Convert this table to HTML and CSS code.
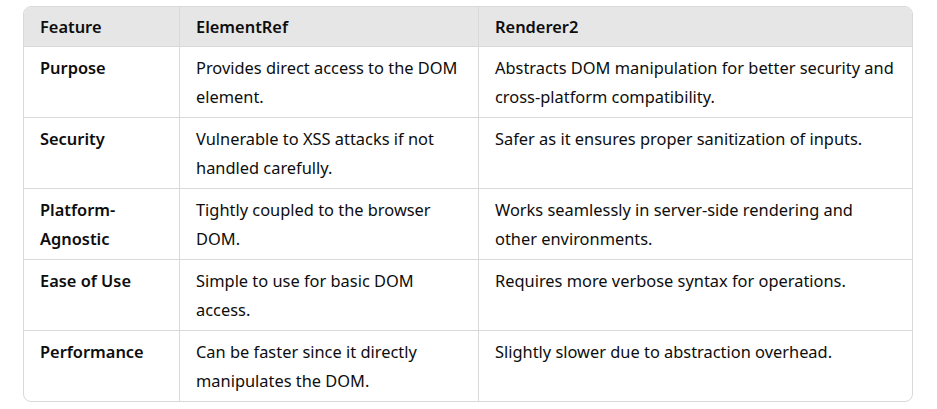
FILE: index.html
```html
<!DOCTYPE html>
<html>
<head>
<meta charset="utf-8">
<link rel="stylesheet" href="styles.css">
</head>
<body>
<div class="wrap">
<table class="cmp">
<colgroup><col class="c1"><col class="c2"><col class="c3"></colgroup>
<thead>
<tr><th>Feature</th><th>ElementRef</th><th>Renderer2</th></tr>
</thead>
<tbody>
<tr><td class="k">Purpose</td><td>Provides direct access to the DOM element.</td><td>Abstracts DOM manipulation for better security and cross-platform compatibility.</td></tr>
<tr><td class="k">Security</td><td>Vulnerable to XSS attacks if not handled carefully.</td><td>Safer as it ensures proper sanitization of inputs.</td></tr>
<tr><td class="k">Platform-Agnostic</td><td>Tightly coupled to the browser DOM.</td><td>Works seamlessly in server-side rendering and other environments.</td></tr>
<tr><td class="k">Ease of Use</td><td>Simple to use for basic DOM access.</td><td>Requires more verbose syntax for operations.</td></tr>
<tr><td class="k">Performance</td><td>Can be faster since it directly manipulates the DOM.</td><td>Slightly slower due to abstraction overhead.</td></tr>
</tbody>
</table>
</div>
</body>
</html>
```
FILE: styles.css
```css
html, body { margin: 0; padding: 0; background: #fff; }
body {
  font-family: "Noto Sans", "Open Sans", sans-serif;
  font-size: 16.4px;
  color: #0d0d0d;
  padding: 6px 0 0 23px;
}
.wrap {
  width: 888px;
  border: 1px solid #d9d9d9;
  border-radius: 8px;
  overflow: hidden;
}
.cmp {
  width: 100%;
  border-collapse: separate;
  border-spacing: 0;
  table-layout: fixed;
}
.c1 { width: 156px; }
.c2 { width: 299px; }
.c3 { width: auto; }
.cmp th, .cmp td {
  text-align: left;
  vertical-align: top;
  padding: 6px 16px;
  line-height: 29px;
  border-right: 1px solid #d9d9d9;
  border-bottom: 1px solid #d9d9d9;
}
.cmp th:last-child, .cmp td:last-child { border-right: none; }
.cmp tbody tr:last-child td { border-bottom: none; }
.cmp th {
  background: #e6e6e6;
  font-weight: 600;
  padding: 5px 16px 5px;
}
.k { font-weight: 600; }
```
